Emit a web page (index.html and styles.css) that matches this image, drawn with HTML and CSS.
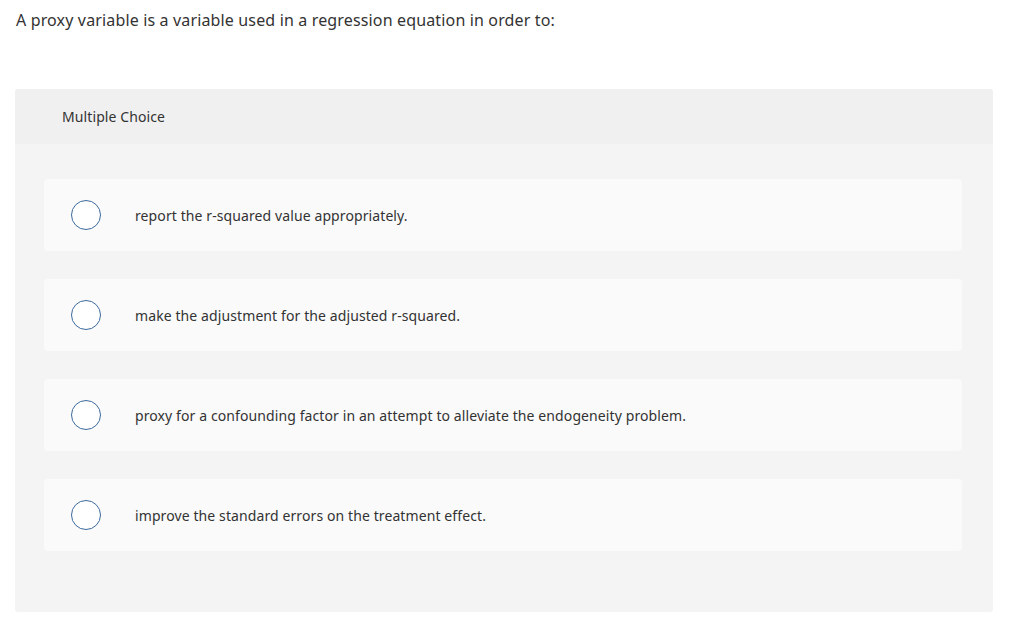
FILE: index.html
```html
<!DOCTYPE html>
<html>
<head>
<meta charset="utf-8">
<link rel="stylesheet" href="styles.css">
</head>
<body>
<p class="question">A proxy variable is a variable used in a regression equation in order to:</p>
<div class="panel">
  <div class="panel-head">Multiple Choice</div>
  <div class="options">
    <div class="option"><span class="radio"></span><span class="label">report the r-squared value appropriately.</span></div>
    <div class="option"><span class="radio"></span><span class="label">make the adjustment for the adjusted r-squared.</span></div>
    <div class="option"><span class="radio"></span><span class="label">proxy for a confounding factor in an attempt to alleviate the endogeneity problem.</span></div>
    <div class="option"><span class="radio"></span><span class="label">improve the standard errors on the treatment effect.</span></div>
  </div>
</div>
</body>
</html>
```
FILE: styles.css
```css
html, body { margin: 0; padding: 0; background: #fff; }
body {
  font-family: "Noto Sans", "Open Sans", "Liberation Sans", sans-serif;
  color: #333;
  width: 1024px;
}
.question {
  margin: 0;
  padding: 10px 0 0 16px;
  font-size: 16px;
  line-height: 20px;
  letter-spacing: 0.15px;
  color: #333;
  height: 79px;
}
.panel {
  margin-left: 15px;
  width: 978px;
  background: #f4f4f4;
  border-radius: 3px;
  padding-bottom: 61px;
}
.panel-head {
  background: #f0f0f0;
  height: 55px;
  display: flex;
  align-items: center;
  padding-left: 47px;
  font-size: 14px;
  letter-spacing: 0.1px;
  color: #333;
  border-radius: 3px 3px 0 0;
}
.options {
  padding: 35px 31px 0 29px;
  display: flex;
  flex-direction: column;
  gap: 28px;
}
.option {
  height: 72px;
  background: #fafafa;
  border-radius: 4px;
  display: flex;
  align-items: center;
  padding-left: 27px;
}
.radio {
  width: 28px;
  height: 28px;
  border: 1.5px solid #3d6a9e;
  border-radius: 50%;
  background: #fff;
  flex: none;
}
.label {
  margin-left: 34px;
  font-size: 14px;
  letter-spacing: 0.1px;
  color: #333;
}
```
